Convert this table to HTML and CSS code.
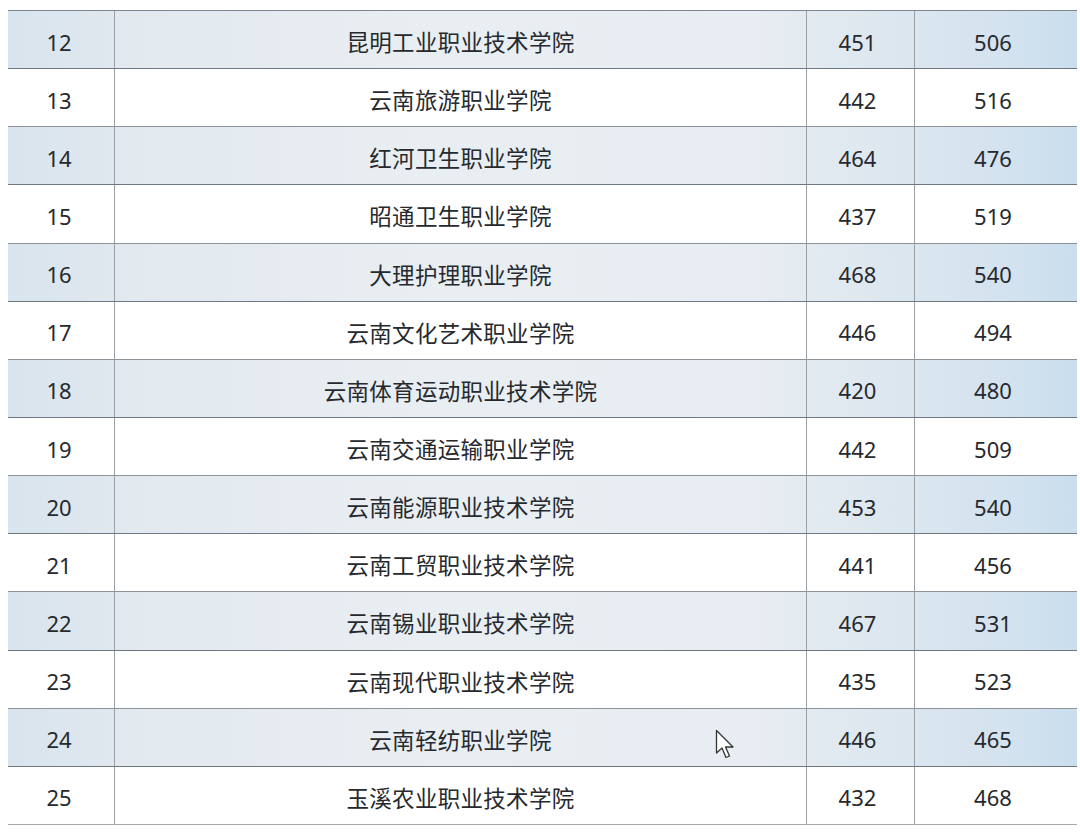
FILE: index.html
```html
<!DOCTYPE html>
<html lang="zh-CN">
<head>
<meta charset="utf-8">
<title>云南高职院校分数线</title>
<link rel="stylesheet" href="styles.css">
</head>
<body>
<div class="page">
  <div class="table">
    <div class="row shaded"><div class="c no">12</div><div class="c name">昆明工业职业技术学院</div><div class="c n1">451</div><div class="c n2">506</div></div>
    <div class="row"><div class="c no">13</div><div class="c name">云南旅游职业学院</div><div class="c n1">442</div><div class="c n2">516</div></div>
    <div class="row shaded"><div class="c no">14</div><div class="c name">红河卫生职业学院</div><div class="c n1">464</div><div class="c n2">476</div></div>
    <div class="row"><div class="c no">15</div><div class="c name">昭通卫生职业学院</div><div class="c n1">437</div><div class="c n2">519</div></div>
    <div class="row shaded"><div class="c no">16</div><div class="c name">大理护理职业学院</div><div class="c n1">468</div><div class="c n2">540</div></div>
    <div class="row"><div class="c no">17</div><div class="c name">云南文化艺术职业学院</div><div class="c n1">446</div><div class="c n2">494</div></div>
    <div class="row shaded"><div class="c no">18</div><div class="c name">云南体育运动职业技术学院</div><div class="c n1">420</div><div class="c n2">480</div></div>
    <div class="row"><div class="c no">19</div><div class="c name">云南交通运输职业学院</div><div class="c n1">442</div><div class="c n2">509</div></div>
    <div class="row shaded"><div class="c no">20</div><div class="c name">云南能源职业技术学院</div><div class="c n1">453</div><div class="c n2">540</div></div>
    <div class="row"><div class="c no">21</div><div class="c name">云南工贸职业技术学院</div><div class="c n1">441</div><div class="c n2">456</div></div>
    <div class="row shaded"><div class="c no">22</div><div class="c name">云南锡业职业技术学院</div><div class="c n1">467</div><div class="c n2">531</div></div>
    <div class="row"><div class="c no">23</div><div class="c name">云南现代职业技术学院</div><div class="c n1">435</div><div class="c n2">523</div></div>
    <div class="row shaded"><div class="c no">24</div><div class="c name cursor-cell">云南轻纺职业学院<svg class="cursor" width="22" height="32" viewBox="0 0 22 32"><path d="M1.5 1.5 L1.5 24 L7 19 L11 28.5 L14.5 27 L10.5 18 L18 18 Z" fill="#ffffff" stroke="#333" stroke-width="1.3" stroke-linejoin="round"/></svg></div><div class="c n1">446</div><div class="c n2">465</div></div>
    <div class="row last"><div class="c no">25</div><div class="c name">玉溪农业职业技术学院</div><div class="c n1">432</div><div class="c n2">468</div></div>
  </div>
</div>
</body>
</html>
```

FILE: styles.css
```css
html, body {
  margin: 0;
  padding: 0;
  background: #ffffff;
}

.page {
  width: 1080px;
  height: 840px;
  padding: 10px 0 0 8px;
  box-sizing: border-box;
  font-family: "Noto Sans", "Noto Sans CJK SC", sans-serif;
  color: #26292d;
}

.table {
  width: 1069px;
  border-top: 1px solid #7d848b;
}

.row {
  display: grid;
  grid-template-columns: 107px 692px 108px 162px;
  height: 58.15px;
  box-sizing: border-box;
  border-bottom: 1px solid #8c9298;
}

.row.shaded {
  border-bottom-color: #6f7780;
  background: linear-gradient(to right, #d8e4ee 0%, #e2e9ef 12%, #e9eef2 40%, #e7edf2 70%, #dde7ef 82%, #d3e2ef 94%, #cadeee 100%);
}

.row.last {
  border-bottom-color: #a4a9ad;
}

.c {
  display: flex;
  align-items: center;
  justify-content: center;
  font-size: 22px;
  padding-top: 4px;
  box-sizing: border-box;
  border-right: 1px solid #9aa0a6;
}

.c.no {
  padding-right: 4px;
}

.c.n1 {
  padding-right: 6px;
}

.c.n2 {
  border-right: none;
  padding-right: 6px;
}

.c.name {
  font-size: 22.5px;
  letter-spacing: 0.3px;
}

.cursor-cell {
  position: relative;
}

.cursor {
  position: absolute;
  left: 600px;
  top: 20px;
}
```
